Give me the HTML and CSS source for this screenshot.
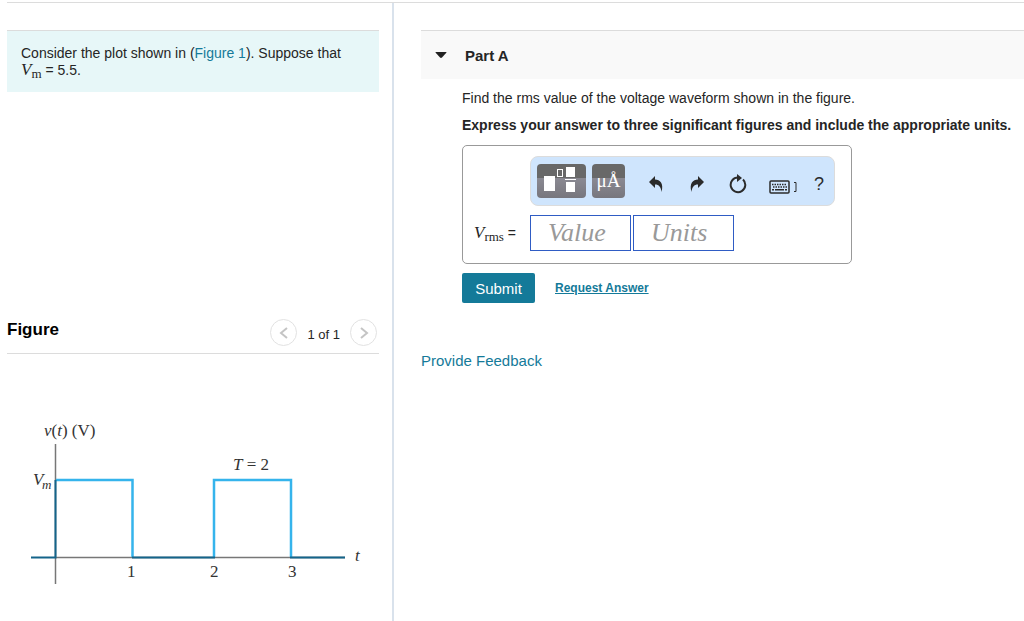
FILE: index.html
```html
<!DOCTYPE html>
<html lang="en">

<head>
    <meta charset="UTF-8">
    <meta name="viewport" content="width=device-width, initial-scale=1.0">
    <title>Part A - RMS value</title>
    <link rel="stylesheet" href="styles.css">
</head>

<body>
    <div class="page">
        <aside class="sidebar">
            <div class="prompt">
                Consider the plot shown in (<a href="#figure">Figure 1</a>). Suppose that<br>
                <span class="math"><i>V</i><sub>m</sub></span> = 5.5.
            </div>

            <section class="figure" id="figure">
                <header class="figure-header">
                    <h2>Figure</h2>
                    <nav class="pager" aria-label="Figures">
                        <button type="button" class="pager-button" aria-label="Previous figure">
                            <svg width="10" height="12" viewBox="0 0 10 12"><path d="M8 1L2 6l6 5"/></svg>
                        </button>
                        <span class="pager-text">1 of 1</span>
                        <button type="button" class="pager-button" aria-label="Next figure">
                            <svg width="10" height="12" viewBox="0 0 10 12"><path d="M2 1l6 5-6 5"/></svg>
                        </button>
                    </nav>
                </header>

                <svg class="plot" width="360" height="246" viewBox="0 0 360 246" role="img" aria-label="Voltage waveform">
                    <!-- axes -->
                    <path class="axis" d="M48.500 90v140M48 203.500h290"/>
                    <!-- waveform -->
                    <path class="wave" d="M49 126H125.500V203M207 203V126H284V203"/>
                    <path class="wave-dark" d="M24 203.500H49.500M48.500 203V126M125 203.500H208M283 203.500H338"/>
                    <text x="37" y="82"><tspan class="var">v</tspan>(<tspan class="var">t</tspan>) (V)</text>
                    <text x="26" y="131" class="var">V</text>
                    <text x="35" y="135" class="var small">m</text>
                    <text x="226" y="116"><tspan class="var">T</tspan> = 2</text>
                    <text x="120" y="223">1</text>
                    <text x="203" y="223">2</text>
                    <text x="281" y="223">3</text>
                    <text x="348" y="207" class="var">t</text>
                </svg>
            </section>
        </aside>

        <main class="content">
            <header class="part-header">
                <svg width="12" height="6" viewBox="0 0 12 6"><path d="M1 0h10q1 0 .3 .8L7 5.500q-1 .8-2 0L.7 .8Q0 0 1 0z" fill="#222"/></svg>
                <h2>Part A</h2>
            </header>

            <form class="part-body">
                <p>Find the rms value of the voltage waveform shown in the figure.</p>
                <p class="instructions">Express your answer to three significant figures and include the appropriate units.</p>

                <div class="answer">
                    <div class="toolbar">
                        <button type="button" class="tool tool-templates" aria-label="Templates">
                            <svg width="49" height="34" viewBox="0 0 49 34">
                                <path d="M7 12h11v15H7zM29 3h9v10h-9zM29 18h9v10h-9zM28 15h11v1H28z" fill="#fff"/>
                                <rect x="20.500" y="5.500" width="5" height="7" fill="none" stroke="#fff"/>
                            </svg>
                        </button>
                        <button type="button" class="tool tool-units">μÅ</button>
                        <button type="button" class="icon-button" aria-label="Undo">
                            <svg width="16" height="18" viewBox="0 0 16 18"><path d="M1 7L7 1v3.500c5 0 9 4 6.500 12.500C13 12 11 9.500 7 9.500V13z"/></svg>
                        </button>
                        <button type="button" class="icon-button" aria-label="Redo">
                            <svg width="16" height="18" viewBox="0 0 16 18"><path d="M15 7L9 1v3.500C4 4.500 0 8.500 2.500 17 3 12 5 9.500 9 9.500V13z"/></svg>
                        </button>
                        <button type="button" class="icon-button" aria-label="Reset">
                            <svg width="18" height="20" viewBox="0 0 18 20"><path d="M9 3.500a7.300 7.300 0 1 0 5 2" fill="none" stroke="#2b2b2b" stroke-width="2"/><path d="M8 0l5 4-5 4z"/></svg>
                        </button>
                        <button type="button" class="icon-button keyboard" aria-label="Keyboard shortcuts">
                            <svg width="28" height="14" viewBox="0 0 28 14">
                                <rect x="1" y="1" width="19" height="12" rx="1" fill="none" stroke="#2b2b2b" stroke-width="1.500"/>
                                <path d="M3 4.500h15M4 7h14" fill="none" stroke="#2b2b2b" stroke-width="1.500" stroke-dasharray="1.500 1"/>
                                <path d="M3 9h2v1.500H3zM6 9h9v1.500H6zM16 9h2v1.500h-2z"/>
                                <path d="M25 2.500h2v9h-2" fill="none" stroke="#2b2b2b"/>
                            </svg>
                        </button>
                        <button type="button" class="icon-button help" aria-label="Help">?</button>
                    </div>
                    <label for="value" class="answer-label"><span class="math"><i>V</i><sub>rms</sub></span> =</label>
                    <div class="fields">
                        <input type="text" id="value" placeholder="Value">
                        <input type="text" id="units" placeholder="Units" aria-label="Units">
                    </div>
                </div>

                <div class="actions">
                    <button type="submit" class="submit">Submit</button>
                    <a href="#" class="request">Request Answer</a>
                </div>
            </form>

            <a href="#" class="feedback">Provide Feedback</a>
        </main>
    </div>
</body>

</html>
```
FILE: styles.css
```css
* {
    box-sizing: border-box;
}

body {
    margin: 2px 0 0 7px;
    font-family: "Liberation Sans", Arial, sans-serif;
    font-size: 14px;
    color: #252525;
    background-color: #fff;
}

a {
    color: #147a99;
    text-decoration: none;
}

h2,
p {
    margin: 0;
}

button {
    padding: 0;
    border: 0;
    font-family: inherit;
    cursor: pointer;
}

svg {
    display: block;
}

.page {
    display: grid;
    grid-template-columns: minmax(240px, 387px) 1fr;
    min-height: calc(100vh - 2px);
    border-top: 1px solid #dcdcdc;
}

.sidebar {
    padding: 27px 13px 0 0;
    border-right: 2px solid #d9e2ec;
}

.prompt {
    padding: 14px 14px 13px;
    border-top: 1px solid #dcdcdc;
    background-color: #e7f7f8;
    line-height: 17px;
}

.math {
    font-family: "Liberation Serif", "Times New Roman", serif;
    font-size: 17px;
    line-height: 0;
}

.math sub {
    font-size: 13px;
    vertical-align: -3px;
}

.figure {
    margin-top: 226px;
}

.figure-header {
    display: flex;
    justify-content: space-between;
    align-items: flex-start;
    height: 36px;
    border-bottom: 1px solid #dcdcdc;
}

.figure-header h2 {
    font-size: 17px;
    line-height: 24px;
    color: #000;
}

.pager {
    display: flex;
    align-items: center;
    gap: 10px;
    padding: 1px 2px 0 0;
}

.pager-text {
    padding-top: 3px;
    font-size: 13px;
}

.pager-button {
    display: grid;
    place-items: center;
    width: 27px;
    height: 27px;
    border: 1px solid #e2e2e2;
    border-radius: 50%;
    background-color: #fff;
}

.pager-button path {
    fill: none;
    stroke: #c4c4c4;
    stroke-width: 2;
}

.plot {
    font-family: "Liberation Serif", "Times New Roman", serif;
    font-size: 17px;
    fill: #333;
}

.plot .var {
    font-style: italic;
}

.plot .small {
    font-size: 13px;
}

.axis {
    fill: none;
    stroke: #777;
    stroke-width: 1.5;
}

.wave {
    fill: none;
    stroke: #35b4ec;
    stroke-width: 2.5;
}

.wave-dark {
    fill: none;
    stroke: #14648a;
    stroke-width: 2;
}

.content {
    padding: 27px 0 0 27px;
}

.part-header {
    display: flex;
    align-items: center;
    gap: 18px;
    height: 49px;
    padding-left: 14px;
    border-top: 1px solid #dcdcdc;
    background-color: #f9f9f9;
}

.part-header h2 {
    font-size: 15px;
}

.part-body {
    padding: 11px 0 0 41px;
    line-height: 17px;
}

.part-body p {
    margin-bottom: 10px;
}

.instructions {
    font-weight: bold;
}

.answer {
    display: grid;
    grid-template-columns: 56px 1fr;
    row-gap: 9px;
    max-width: 390px;
    margin-top: 11px;
    padding: 10px 16px 12px 11px;
    border: 1px solid #999;
    border-radius: 5px;
}

.toolbar {
    grid-column: 2;
    display: flex;
    align-items: center;
    height: 50px;
    padding: 0 3px 0 6px;
    border: 1px solid #dcdcdc;
    border-radius: 8px;
    background-color: #cfe5fd;
}

.tool {
    height: 34px;
    margin-right: 6px;
    border-radius: 4px;
    background: linear-gradient(#686868 0 42%, #8a8992 42%, #77767d);
    color: #fff;
}

.tool-templates {
    width: 49px;
}

.tool-units {
    width: 33px;
    margin-right: 10px;
    font-family: "Liberation Serif", "Times New Roman", serif;
    font-size: 19px;
}

.icon-button {
    display: grid;
    place-items: center;
    width: 41px;
    height: 34px;
    padding-top: 6px;
    background: none;
    color: #2b2b2b;
    font-size: 18px;
}

.icon-button svg {
    fill: #2b2b2b;
}

.keyboard {
    width: 49px;
    padding-top: 12px;
}

.help {
    width: 24px;
}

.answer-label {
    align-self: center;
    white-space: nowrap;
}

.fields {
    display: flex;
    gap: 2px;
}

.fields input {
    width: 101px;
    height: 36px;
    padding: 0 17px;
    border: 1px solid #2f5cc4;
    border-radius: 0;
    font: italic 26px "Liberation Serif", "Times New Roman", serif;
}

.fields input::placeholder {
    color: #999;
}

.actions {
    display: flex;
    align-items: center;
    gap: 20px;
    margin-top: 9px;
}

.submit {
    width: 73px;
    height: 30px;
    border-radius: 2px;
    background-color: #147a99;
    color: #fff;
    font-size: 15px;
}

.request {
    font-size: 12px;
    font-weight: bold;
    text-decoration: underline;
}

.feedback {
    display: inline-block;
    margin-top: 49px;
    font-size: 15px;
}
```
